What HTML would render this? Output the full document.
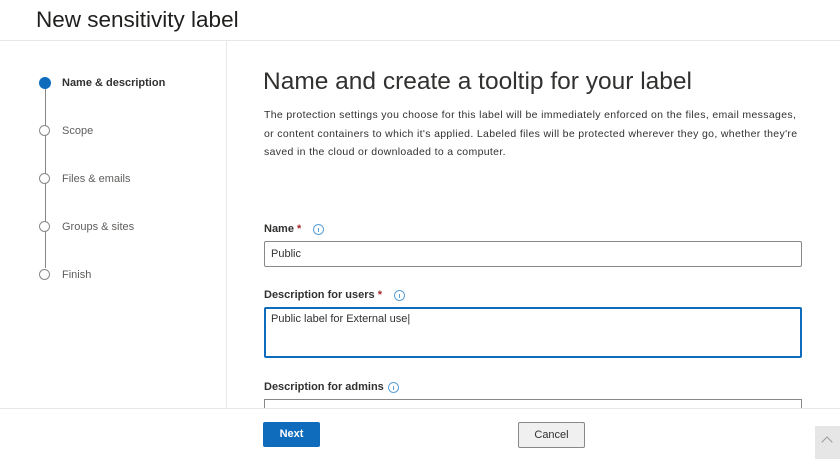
<!DOCTYPE html>
<html><head><style>
body{margin:0;width:840px;height:459px;overflow:hidden;background:#fff;font-family:"Liberation Sans",sans-serif;color:#323130;position:relative}
.a{position:absolute}
.t{font-size:11px}
.lbl{font-size:11px;font-weight:bold;color:#323130}
.req{color:#a4262c}
.info{display:inline-block;width:9px;height:9px;border:1px solid #5aa0d8;border-radius:50%;vertical-align:middle;margin-left:12px;position:relative}
.info:after{content:"";position:absolute;left:4px;top:3px;width:1px;height:4px;background:#5aa0d8}
.c{width:9px;height:9px;border:1.5px solid #8a8886;border-radius:50%;background:#fff}
</style></head><body>
<div class="a" style="left:36px;top:7px;font-size:22.5px;color:#201f1e">New sensitivity label</div>
<div class="a" style="left:0;top:40px;width:840px;height:1px;background:#e8e8e8"></div>
<div class="a" style="left:226px;top:41px;width:1px;height:367px;background:#e8e8e8"></div>
<div class="a" style="left:45px;top:88px;width:1px;height:180px;background:#8a8886"></div>
<div class="a" style="left:39px;top:77px;width:12px;height:12px;border-radius:50%;background:#0f6cbd"></div>
<div class="a c" style="left:39px;top:125px"></div>
<div class="a c" style="left:39px;top:173px"></div>
<div class="a c" style="left:39px;top:221px"></div>
<div class="a c" style="left:39px;top:269px"></div>
<div class="a t" style="left:62px;top:77px;font-weight:bold">Name &amp; description</div>
<div class="a t" style="left:62px;top:125px;color:#605e5c">Scope</div>
<div class="a t" style="left:62px;top:173px;color:#605e5c">Files &amp; emails</div>
<div class="a t" style="left:62px;top:221px;color:#605e5c">Groups &amp; sites</div>
<div class="a t" style="left:62px;top:269px;color:#605e5c">Finish</div>
<div class="a" style="left:263px;top:68px;font-size:24.5px;color:#323130">Name and create a tooltip for your label</div>
<div class="a t" style="left:264px;top:106px;line-height:18.5px;font-size:10.5px;letter-spacing:0.34px;white-space:nowrap">The protection settings you choose for this label will be immediately enforced on the files, email messages,<br>or content containers to which it's applied. Labeled files will be protected wherever they go, whether they're<br>saved in the cloud or downloaded to a computer.</div>
<div class="a lbl" style="left:264px;top:223px">Name <span class="req">*</span><span class="info"></span></div>
<div class="a t" style="left:264px;top:241px;height:24px;border:1px solid #8a8886;border-radius:2px;padding-left:6px;line-height:24px;width:530px">Public</div>
<div class="a lbl" style="left:264px;top:289px">Description for users <span class="req">*</span><span class="info"></span></div>
<div class="a t" style="left:264px;top:307px;border:2px solid #0f6cbd;border-radius:2px;padding:4px 0 0 5px;box-sizing:border-box;width:538px;height:51px">Public label for External use|</div>
<div class="a lbl" style="left:264px;top:381px">Description for admins<span class="info" style="margin-left:4px"></span></div>
<div class="a" style="left:264px;top:399px;width:536px;height:20px;border:1px solid #8a8886"></div>
<div class="a" style="left:0;top:408px;width:840px;height:51px;background:#fff;border-top:1px solid #e8e8e8"></div>
<div class="a" style="left:263px;top:422px;width:57px;height:25px;background:#0f6cbd;border-radius:2px;color:#fff;font-size:11px;font-weight:bold;text-align:center;line-height:25px">Next</div>
<div class="a" style="left:518px;top:422px;width:65px;height:24px;background:#f0f0f0;border:1px solid #8a8886;border-radius:2px;font-size:11px;text-align:center;line-height:24px">Cancel</div>
<div class="a" style="left:815px;top:426px;width:25px;height:33px;background:#e6e6e6"></div>
<div class="a" style="left:823px;top:438px;width:7px;height:7px;border-left:1px solid #999;border-top:1px solid #999;transform:rotate(45deg)"></div>
</body></html>
